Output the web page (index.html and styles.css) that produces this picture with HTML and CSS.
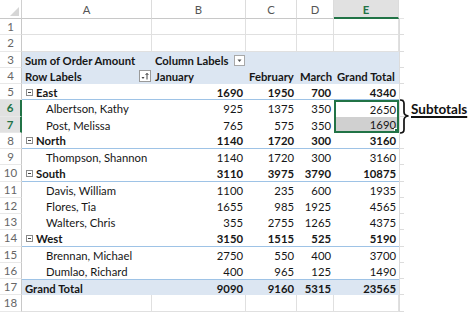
FILE: index.html
```html
<!DOCTYPE html>
<html>
<head>
<meta charset="utf-8">
<link rel="stylesheet" href="styles.css">
</head>
<body>
<div class="page">
  <div class="sheet">
    <div class="row hdr">
      <div class="corner"><svg width="9" height="9" viewBox="0 0 9 9"><path d="M9 0 L9 9 L0 9 Z" fill="#d6d6d6"/></svg></div>
      <div class="ch">A</div><div class="ch">B</div><div class="ch">C</div><div class="ch">D</div><div class="ch sel">E</div><div class="ch stubh"></div>
    </div>
    <div class="row">
      <div class="rn">1</div><div class="g"></div><div class="g"></div><div class="g"></div><div class="g"></div><div class="g"></div><div class="stub"></div>
    </div>
    <div class="row">
      <div class="rn">2</div><div class="g"></div><div class="g"></div><div class="g"></div><div class="g"></div><div class="g"></div><div class="stub"></div>
    </div>
    <div class="row">
      <div class="rn">3</div>
      <div class="c ph b">Sum of Order Amount</div>
      <div class="c ph b">Column Labels<span class="dd"><svg width="9" height="9" viewBox="0 0 9 9"><path d="M2.5 3.5 L6.5 3.5 L4.5 6 Z" fill="#555"/></svg></span></div>
      <div class="c ph"></div><div class="c ph"></div><div class="c ph"></div><div class="stub"></div>
    </div>
    <div class="row">
      <div class="rn">4</div>
      <div class="c ph b sp">Row Labels<span class="sortb"><svg width="10" height="10" viewBox="0 0 10 10"><path d="M1.5 6 L4.5 6 L3 8 Z" fill="#444"/><path d="M7 8.5 L7 2.5 M5.6 4 L7 2.3 L8.4 4" stroke="#444" stroke-width="1" fill="none"/></svg></span></div>
      <div class="c ph b">January</div><div class="c ph b">February</div><div class="c ph b">March</div><div class="c ph b">Grand Total</div><div class="stub"></div>
    </div>
    <div class="row">
      <div class="rn">5</div>
      <div class="c b rg"><span class="tog"></span>East</div>
      <div class="c n b rg">1690</div><div class="c n b rg">1950</div><div class="c n b rg">700</div><div class="c n b rg">4340</div><div class="stub"></div>
    </div>
    <div class="row">
      <div class="rn on">6</div>
      <div class="c it">Albertson, Kathy</div>
      <div class="c n">925</div><div class="c n">1375</div><div class="c n">350</div><div class="c n selA">2650</div><div class="stub"></div>
    </div>
    <div class="row">
      <div class="rn on">7</div>
      <div class="c it">Post, Melissa</div>
      <div class="c n">765</div><div class="c n">575</div><div class="c n">350</div><div class="c n selB">1690<span class="handle"></span></div><div class="stub"></div>
    </div>
    <div class="row">
      <div class="rn">8</div>
      <div class="c b rg"><span class="tog"></span>North</div>
      <div class="c n b rg">1140</div><div class="c n b rg">1720</div><div class="c n b rg">300</div><div class="c n b rg">3160</div><div class="stub"></div>
    </div>
    <div class="row">
      <div class="rn">9</div>
      <div class="c it">Thompson, Shannon</div>
      <div class="c n">1140</div><div class="c n">1720</div><div class="c n">300</div><div class="c n">3160</div><div class="stub"></div>
    </div>
    <div class="row">
      <div class="rn">10</div>
      <div class="c b rg"><span class="tog"></span>South</div>
      <div class="c n b rg">3110</div><div class="c n b rg">3975</div><div class="c n b rg">3790</div><div class="c n b rg">10875</div><div class="stub"></div>
    </div>
    <div class="row">
      <div class="rn">11</div>
      <div class="c it">Davis, William</div>
      <div class="c n">1100</div><div class="c n">235</div><div class="c n">600</div><div class="c n">1935</div><div class="stub"></div>
    </div>
    <div class="row">
      <div class="rn">12</div>
      <div class="c it">Flores, Tia</div>
      <div class="c n">1655</div><div class="c n">985</div><div class="c n">1925</div><div class="c n">4565</div><div class="stub"></div>
    </div>
    <div class="row">
      <div class="rn">13</div>
      <div class="c it">Walters, Chris</div>
      <div class="c n">355</div><div class="c n">2755</div><div class="c n">1265</div><div class="c n">4375</div><div class="stub"></div>
    </div>
    <div class="row">
      <div class="rn">14</div>
      <div class="c b rg"><span class="tog"></span>West</div>
      <div class="c n b rg">3150</div><div class="c n b rg">1515</div><div class="c n b rg">525</div><div class="c n b rg">5190</div><div class="stub"></div>
    </div>
    <div class="row">
      <div class="rn">15</div>
      <div class="c it">Brennan, Michael</div>
      <div class="c n">2750</div><div class="c n">550</div><div class="c n">400</div><div class="c n">3700</div><div class="stub"></div>
    </div>
    <div class="row">
      <div class="rn">16</div>
      <div class="c it">Dumlao, Richard</div>
      <div class="c n">400</div><div class="c n">965</div><div class="c n">125</div><div class="c n">1490</div><div class="stub"></div>
    </div>
    <div class="row">
      <div class="rn">17</div>
      <div class="c b gt">Grand Total</div>
      <div class="c n b gt">9090</div><div class="c n b gt">9160</div><div class="c n b gt">5315</div><div class="c n b gt">23565</div><div class="stub"></div>
    </div>
    <div class="row">
      <div class="rn">18</div><div class="g"></div><div class="g"></div><div class="g"></div><div class="g"></div><div class="g"></div><div class="stub"></div>
    </div>
  </div>
  <div class="note">
    <svg class="brace" width="11" height="35" viewBox="0 0 11 35"><path d="M1 1 Q5 1 5 4.5 L5 13 Q5 16.5 9.5 17 Q5 17.5 5 21 L5 30.5 Q5 34 1 34" stroke="#111" stroke-width="1.7" fill="none"/></svg>
    <span class="label">Subtotals</span>
  </div>
</div>
</body>
</html>
```

FILE: styles.css
```css
body {
  margin: 0;
  background: #fff;
  font-family: Lato, "Noto Sans", sans-serif;
  font-size: 11.3px;
  color: #161616;
}

.page {
  position: relative;
  width: 474px;
  height: 312px;
  overflow: hidden;
  display: flex;
}

.sheet {
  width: 404px;
  flex: none;
}

.row {
  display: grid;
  grid-template-columns: 22px 130px 94px 51px 37px 65px 5px;
  height: 16.25px;
}

.row.hdr {
  height: 19px;
}

.corner {
  box-sizing: border-box;
  border-right: 1px solid #d0d0d0;
  border-bottom: 1px solid #c8c8c8;
  display: flex;
  align-items: flex-end;
  justify-content: flex-end;
  padding: 0 2px 2px 0;
}

.ch {
  box-sizing: border-box;
  display: flex;
  align-items: center;
  justify-content: center;
  color: #555;
  border-right: 1px solid #dcdcdc;
  border-bottom: 1px solid #c8c8c8;
  padding-top: 1px;
}

.ch.sel {
  background: #e1e1e1;
  color: #217346;
  font-weight: 700;
  border-bottom: 2px solid #217346;
}

.ch.stubh {
  border-right: none;
  border-bottom: 1px solid #e4e4e4;
}

.rn {
  box-sizing: border-box;
  display: flex;
  align-items: center;
  justify-content: center;
  color: #666;
  font-size: 11.5px;
  border-right: 1px solid #c8c8c8;
  border-bottom: 1px solid #e8e8e8;
}

.rn.on {
  background: #e1e1e1;
  color: #217346;
  font-weight: 700;
  border-right: 2px solid #217346;
}

.g {
  box-sizing: border-box;
  border-right: 1px solid #e0e0e0;
  border-bottom: 1px solid #e0e0e0;
}

.stub {
  box-sizing: border-box;
  border-left: 1px solid #dcdcdc;
  border-bottom: 1px solid #dcdcdc;
}

.c {
  box-sizing: border-box;
  display: flex;
  align-items: center;
  padding: 1px 3px 0 3px;
  white-space: nowrap;
  overflow: hidden;
}

.n {
  justify-content: flex-end;
}

.b {
  font-weight: 700;
}

.ph {
  background: #dce6f2;
}

.sp {
  justify-content: space-between;
  padding-right: 1px;
}

.dd {
  box-sizing: border-box;
  width: 11px;
  height: 11px;
  margin-left: 6px;
  border: 1px solid #a8a8a8;
  background: #fff;
  display: flex;
}

.sortb {
  box-sizing: border-box;
  width: 12px;
  height: 12px;
  border: 1px solid #9a9a9a;
  background: #fff;
  display: flex;
}

.rg {
  border-bottom: 1px solid #9ec3e6;
}

.tog {
  box-sizing: border-box;
  width: 7px;
  height: 7px;
  border: 1px solid #8a8a8a;
  margin: 0 3px 0 1px;
  position: relative;
  flex: none;
}

.tog::after {
  content: "";
  position: absolute;
  left: 1px;
  right: 1px;
  top: 2px;
  height: 1px;
  background: #444;
}

.it {
  padding-left: 24px;
}

.gt {
  background: #dce6f2;
  border-top: 1px solid #9ec3e6;
}

.selA {
  border: 2px solid #217346;
  border-bottom: none;
  padding-right: 1px;
}

.selB {
  position: relative;
  border: 2px solid #217346;
  border-top: none;
  background: #d0d0d0;
  padding-right: 1px;
}

.handle {
  position: absolute;
  right: -4px;
  bottom: -4px;
  width: 5px;
  height: 5px;
  background: #217346;
  border: 1px solid #fff;
}

.note {
  position: absolute;
  left: 399px;
  top: 99px;
  display: flex;
  align-items: flex-start;
}

.brace {
  flex: none;
}

.label {
  margin: 2px 0 0 1px;
  font-size: 13.5px;
  font-weight: 700;
  color: #111;
  text-decoration: underline;
  text-decoration-thickness: 1.5px;
  text-underline-offset: 2px;
}
```
